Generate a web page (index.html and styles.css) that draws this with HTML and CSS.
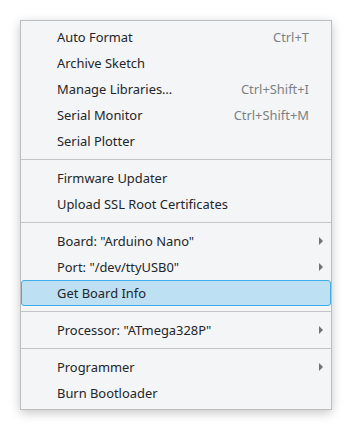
FILE: index.html
```html
<!DOCTYPE html>
<html lang="en">
<head>
    <meta charset="UTF-8">
    <meta name="viewport" content="width=device-width, initial-scale=1.0">
    <title>Tools Menu</title>
    <link rel="stylesheet" href="styles.css">
</head>
<body>
    <div class="menu">
        <div class="item"><span>Auto Format</span><span class="shortcut">Ctrl+T</span></div>
        <div class="item"><span>Archive Sketch</span></div>
        <div class="item"><span>Manage Libraries…</span><span class="shortcut">Ctrl+Shift+I</span></div>
        <div class="item"><span>Serial Monitor</span><span class="shortcut">Ctrl+Shift+M</span></div>
        <div class="item"><span>Serial Plotter</span></div>
        <hr>
        <div class="item"><span>Firmware Updater</span></div>
        <div class="item"><span>Upload SSL Root Certificates</span></div>
        <hr>
        <div class="item"><span>Board: "Arduino Nano"</span><span class="arrow"></span></div>
        <div class="item"><span>Port: "/dev/ttyUSB0"</span><span class="arrow"></span></div>
        <div class="item active"><span>Get Board Info</span></div>
        <hr>
        <div class="item"><span>Processor: "ATmega328P"</span><span class="arrow"></span></div>
        <hr>
        <div class="item"><span>Programmer</span><span class="arrow"></span></div>
        <div class="item"><span>Burn Bootloader</span></div>
    </div>
</body>
</html>
```

FILE: styles.css
```css
*{
    box-sizing: border-box;
}
body{
    margin: 0;
    padding: 20px;
    background-color: #ffffff;
    font-family: "Noto Sans", sans-serif;
}
.menu{
    width: 312px;
    padding: 3px 0;
    background-color: #f4f5f7;
    border: 1px solid #bcbdbf;
    box-shadow: 0 3px 10px rgba(0,0,0,0.22);
}
.item{
    display: flex;
    align-items: center;
    height: 26px;
    padding: 0 7px 0 35px;
    font-size: 12.9px;
    color: #232629;
    border: 1px solid transparent;
    border-radius: 3px;
}
.item.active{
    background-color: #bde1f3;
    border-color: #3daee9;
}
.shortcut{
    margin-left: auto;
    margin-right: 14px;
    color: #7b8185;
}
.arrow{
    margin-left: auto;
    width: 0;
    height: 0;
    border-top: 4px solid transparent;
    border-bottom: 4px solid transparent;
    border-left: 4px solid #707274;
}
hr{
    margin: 5px 0;
    border: none;
    border-top: 1px solid #c3c5c7;
}
```
